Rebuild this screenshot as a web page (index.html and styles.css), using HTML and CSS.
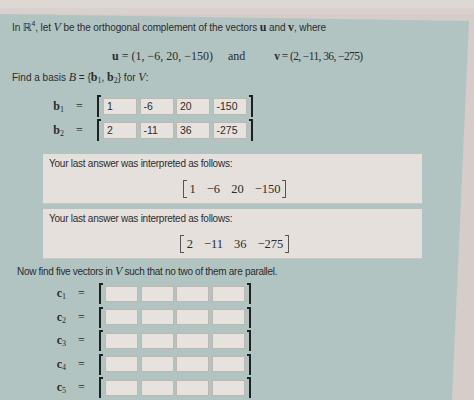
FILE: index.html
```html
<!DOCTYPE html>
<html>
<head>
<meta charset="utf-8">
<link rel="stylesheet" href="styles.css">
</head>
<body>
<div class="topstrip"></div>
<div class="panel">
  <p class="txt intro">In <span class="bb">ℝ</span><sup class="sup">4</sup>, let <span class="mi">V</span> be the orthogonal complement of the vectors <span class="mb">u</span> and <span class="mb">v</span>, where</p>
  <div class="eq"><span class="mb">u</span> = (1, −6, 20, −150)<span class="and">and</span><span class="vpart"><span class="mb">v</span> = (2, −11, 36, −275)</span></div>
  <p class="txt find">Find a basis <span class="mi">B</span> = {<span class="mb">b</span><sub class="sub">1</sub>, <span class="mb">b</span><sub class="sub">2</sub>} for <span class="mi">V</span>:</p>

  <div class="vecs">
    <div class="vrow">
      <span class="lbl"><span class="mb">b</span><sub class="sub">1</sub></span><span class="eqs">=</span>
      <span class="brk lb"></span>
      <span class="inp">1</span><span class="inp">-6</span><span class="inp">20</span><span class="inp">-150</span>
      <span class="brk rb"></span>
    </div>
    <div class="vrow">
      <span class="lbl"><span class="mb">b</span><sub class="sub">2</sub></span><span class="eqs">=</span>
      <span class="brk lb"></span>
      <span class="inp">2</span><span class="inp">-11</span><span class="inp">36</span><span class="inp">-275</span>
      <span class="brk rb"></span>
    </div>
  </div>

  <div class="box">
    <p class="txt boxtxt">Your last answer was interpreted as follows:</p>
    <div class="mat"><span class="mbr"></span><span>1</span><span>−6</span><span>20</span><span>−150</span><span class="mbr r"></span></div>
  </div>
  <div class="box box2">
    <p class="txt boxtxt">Your last answer was interpreted as follows:</p>
    <div class="mat"><span class="mbr"></span><span>2</span><span>−11</span><span>36</span><span>−275</span><span class="mbr r"></span></div>
  </div>

  <p class="txt now">Now find five vectors in <span class="mi">V</span> such that no two of them are parallel.</p>

  <div class="vecs cvecs">
    <div class="vrow crow">
      <span class="lbl"><span class="mb">c</span><sub class="sub">1</sub></span><span class="eqs">=</span>
      <span class="brk lb"></span>
      <span class="inp"></span><span class="inp"></span><span class="inp"></span><span class="inp"></span>
      <span class="brk rb"></span>
    </div>
    <div class="vrow crow">
      <span class="lbl"><span class="mb">c</span><sub class="sub">2</sub></span><span class="eqs">=</span>
      <span class="brk lb"></span>
      <span class="inp"></span><span class="inp"></span><span class="inp"></span><span class="inp"></span>
      <span class="brk rb"></span>
    </div>
    <div class="vrow crow">
      <span class="lbl"><span class="mb">c</span><sub class="sub">3</sub></span><span class="eqs">=</span>
      <span class="brk lb"></span>
      <span class="inp"></span><span class="inp"></span><span class="inp"></span><span class="inp"></span>
      <span class="brk rb"></span>
    </div>
    <div class="vrow crow">
      <span class="lbl"><span class="mb">c</span><sub class="sub">4</sub></span><span class="eqs">=</span>
      <span class="brk lb"></span>
      <span class="inp"></span><span class="inp"></span><span class="inp"></span><span class="inp"></span>
      <span class="brk rb"></span>
    </div>
    <div class="vrow crow">
      <span class="lbl"><span class="mb">c</span><sub class="sub">5</sub></span><span class="eqs">=</span>
      <span class="brk lb"></span>
      <span class="inp"></span><span class="inp"></span><span class="inp"></span><span class="inp"></span>
      <span class="brk rb"></span>
    </div>
  </div>
</div>
</body>
</html>
```

FILE: styles.css
```css
html, body {
  margin: 0;
  padding: 0;
}
body {
  width: 474px;
  height: 400px;
  overflow: hidden;
  background: #d6ccc9;
  font-family: "Liberation Sans", Arial, sans-serif;
  color: #2a2c2e;
}
.topstrip {
  height: 14px;
  background: linear-gradient(#ded8d5 0 8px, #d9d1ce 8px);
  box-sizing: border-box;
}
.panel {
  width: 470px;
  height: 386px;
  background: #b2c4c1;
  clip-path: polygon(0 0, 469px 7px, 452px 100%, 0 100%);
  padding-top: 1px;
  box-sizing: border-box;
}
.txt {
  margin: 0;
  font-size: 10px;
  line-height: 14px;
  white-space: nowrap;
}
.intro {
  margin-top: 5px;
  padding-left: 12px;
  letter-spacing: -0.1px;
}
.bb {
  font-family: "DejaVu Sans", sans-serif;
  font-size: 11px;
}
.sup {
  font-size: 7px;
  vertical-align: 5px;
  line-height: 0;
}
.mi {
  font-family: "Liberation Serif", serif;
  font-style: italic;
  font-size: 12px;
}
.mb {
  font-family: "Liberation Serif", serif;
  font-weight: bold;
  font-size: 12px;
}
.sub {
  font-family: "Liberation Serif", serif;
  font-size: 8px;
  vertical-align: -2px;
  line-height: 0;
}
.eq {
  margin-top: 14px;
  height: 14px;
  line-height: 14px;
  padding-left: 112px;
  font-family: "Liberation Serif", serif;
  font-size: 12px;
  white-space: nowrap;
}
.and {
  margin: 0 29px 0 15px;
}
.vpart {
  font-size: 11.5px;
  letter-spacing: -0.6px;
}
.vpart .mb {
  font-size: 11.5px;
}
.find {
  margin-top: 7px;
  padding-left: 12px;
}
.vecs {
  display: flex;
  flex-direction: column;
  gap: 2px;
  margin-top: 10px;
}
.vrow {
  display: flex;
  align-items: center;
  height: 22px;
}
.lbl {
  width: 64px;
  text-align: right;
  font-size: 12px;
}
.eqs {
  width: 33px;
  text-align: center;
  font-family: "Liberation Serif", serif;
  font-size: 12px;
  padding-right: 2px;
  box-sizing: border-box;
}
.brk {
  align-self: stretch;
  width: 4px;
  border-top: 2px solid #1e2022;
  box-sizing: border-box;
}
.lb {
  border-left: 2px solid #1e2022;
  margin-right: 2px;
}
.rb {
  border-right: 2px solid #1e2022;
}
.inp {
  width: 34px;
  height: 17px;
  margin-right: 2.5px;
  background: #e7e2dd;
  border: 1px solid #bdb8b3;
  box-sizing: border-box;
  font-size: 10.5px;
  line-height: 15px;
  padding-left: 3px;
}
.box {
  margin: 13px 0 0 43px;
  width: 379px;
  height: 50px;
  background: #e5e0db;
  box-sizing: border-box;
  padding-top: 3px;
  border-bottom: 1px solid #cbc6c1;
}
.box2 {
  margin-top: 5px;
}
.boxtxt {
  padding-left: 6px;
  letter-spacing: -0.25px;
}
.mat {
  margin-top: 10px;
  display: flex;
  justify-content: center;
  align-items: center;
  gap: 11px;
  font-family: "Liberation Serif", serif;
  font-size: 12.5px;
  height: 16px;
  padding-left: 4px;
}
.mbr {
  width: 3px;
  height: 16px;
  border: 1px solid #555;
  border-right: none;
  margin-right: -8px;
}
.mbr.r {
  border: 1px solid #555;
  border-left: none;
  margin-right: 0;
  margin-left: -9px;
}
.now {
  margin-top: 5px;
  padding-left: 17px;
  letter-spacing: -0.3px;
}
.cvecs {
  margin-top: 4px;
  gap: 2.5px;
  padding-left: 2px;
}
.crow {
  height: 21px;
}
.crow .inp {
  height: 16px;
  width: 33px;
}
```
